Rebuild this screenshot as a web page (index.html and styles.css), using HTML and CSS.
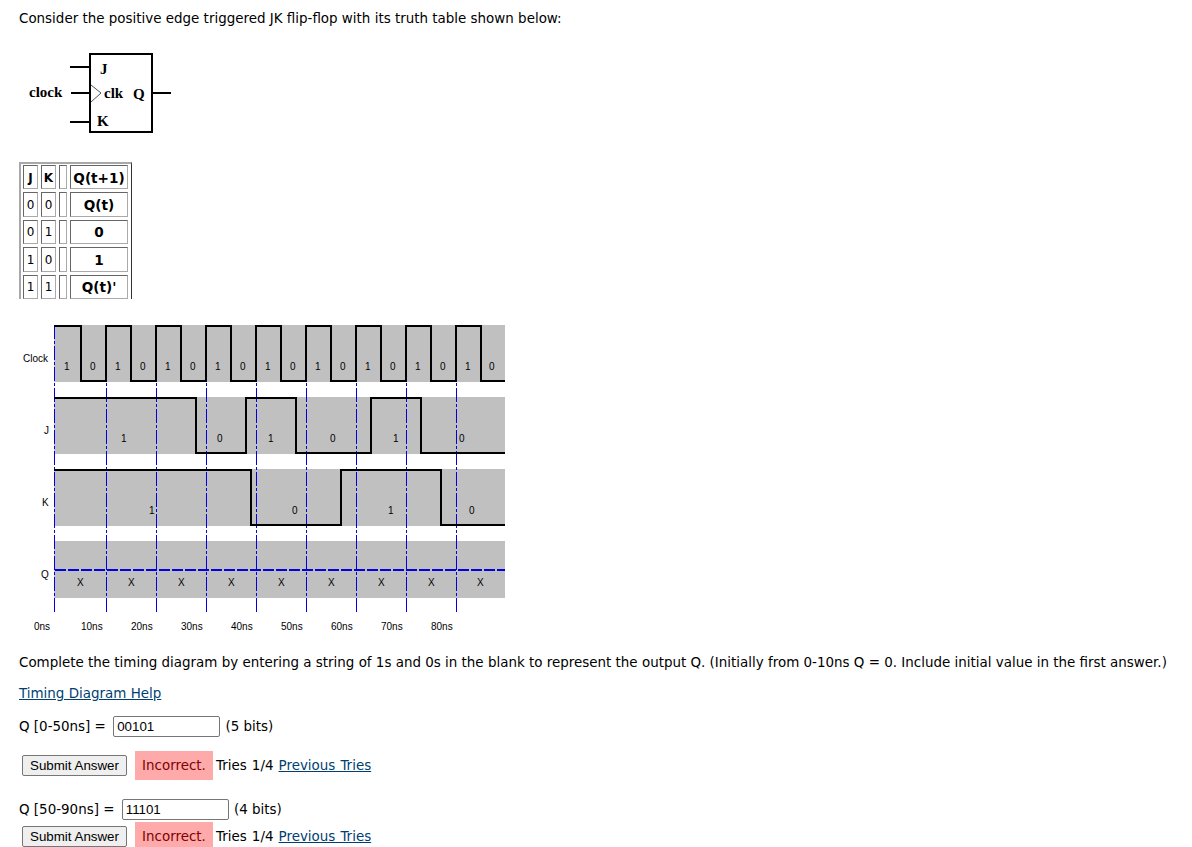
FILE: index.html
```html
<!DOCTYPE html>
<html lang="en">
<head>
    <meta charset="UTF-8">
    <title>JK flip-flop timing diagram</title>
    <link rel="stylesheet" href="styles.css">
</head>
<body>
    <p class="intro">Consider the positive edge triggered JK flip-flop with its truth table shown below:</p>

    <svg class="flipflop" width="160" height="90" viewBox="20 50 160 90">
        <rect x="90" y="54" width="62" height="78" fill="#fff" stroke="#000" stroke-width="2"/>
        <path d="M70 67h20M71 93h19M70 122h20M153 93h18" stroke="#000" stroke-width="2" fill="none"/>
        <path d="M91 85l10 8-10 9" stroke="#555" stroke-width="1" fill="#fff"/>
        <text class="ff-label" x="100" y="74">J</text>
        <text class="ff-label" x="29" y="97">clock</text>
        <text class="ff-label" x="104" y="98">clk</text>
        <text class="ff-label" x="133" y="99">Q</text>
        <text class="ff-label" x="97" y="126">K</text>
    </svg>

    <div class="truth-wrap">
        <table class="truth">
            <tr><th class="bit">J</th><th class="bit">K</th><td class="gap"></td><th>Q(t+1)</th></tr>
            <tr><td class="bit">0</td><td class="bit">0</td><td class="gap"></td><th>Q(t)</th></tr>
            <tr><td class="bit">0</td><td class="bit">1</td><td class="gap"></td><th>0</th></tr>
            <tr><td class="bit">1</td><td class="bit">0</td><td class="gap"></td><th>1</th></tr>
            <tr><td class="bit">1</td><td class="bit">1</td><td class="gap"></td><th>Q(t)'</th></tr>
        </table>
    </div>

    <svg class="timing" width="500" height="320" viewBox="19 315 500 320">
        <!-- bands -->
        <rect class="band" x="54" y="325" width="451" height="57"/>
        <rect class="band" x="54" y="397" width="451" height="57"/>
        <rect class="band" x="54" y="469" width="451" height="57"/>
        <rect class="band" x="54" y="541" width="451" height="57"/>

        <!-- clock period markers -->
        <path class="marker" d="M54.5 325V613M106.5 325V613M156.5 325V613M206.5 325V613M256.5 325V613M306.5 325V613M356.5 325V613M406.5 325V613M456.5 325V613"/>
        <path class="q-line" d="M55 570H505"/>

        <!-- waves -->
        <path class="wave" d="M54 326H81V381H106V326H131V381H156V326H181V381H206V326H231V381H256V326H281V381H306V326H331V381H356V326H381V381H406V326H431V381H456V326H481V381H505"/>
        <path class="wave" d="M54 398H196V453H246V398H296V453H371V398H421V453H505"/>
        <path class="wave" d="M54 470H251V525H341V470H441V525H505"/>

        <text class="t" x="23" y="362">Clock</text>
        <text class="t" x="44" y="434">J</text>
        <text class="t" x="42" y="506">K</text>
        <text class="t" x="41" y="578">Q</text>

        <text class="t" x="64" y="370">1</text><text class="t" x="90" y="370">0</text>
        <text class="t" x="115" y="370">1</text><text class="t" x="140" y="370">0</text>
        <text class="t" x="165" y="370">1</text><text class="t" x="190" y="370">0</text>
        <text class="t" x="215" y="370">1</text><text class="t" x="240" y="370">0</text>
        <text class="t" x="265" y="370">1</text><text class="t" x="290" y="370">0</text>
        <text class="t" x="315" y="370">1</text><text class="t" x="340" y="370">0</text>
        <text class="t" x="365" y="370">1</text><text class="t" x="390" y="370">0</text>
        <text class="t" x="415" y="370">1</text><text class="t" x="440" y="370">0</text>
        <text class="t" x="465" y="370">1</text><text class="t" x="489" y="370">0</text>

        <text class="t" x="121" y="442">1</text><text class="t" x="217" y="442">0</text>
        <text class="t" x="268" y="442">1</text><text class="t" x="330" y="442">0</text>
        <text class="t" x="393" y="442">1</text><text class="t" x="459" y="442">0</text>

        <text class="t" x="149" y="514">1</text><text class="t" x="292" y="514">0</text>
        <text class="t" x="388" y="514">1</text><text class="t" x="469" y="514">0</text>

        <text class="t" x="77" y="586">X</text><text class="t" x="128" y="586">X</text>
        <text class="t" x="178" y="586">X</text><text class="t" x="228" y="586">X</text>
        <text class="t" x="278" y="586">X</text><text class="t" x="328" y="586">X</text>
        <text class="t" x="378" y="586">X</text><text class="t" x="428" y="586">X</text>
        <text class="t" x="477" y="586">X</text>

        <text class="t" x="34" y="630">0ns</text><text class="t" x="81" y="630">10ns</text>
        <text class="t" x="131" y="630">20ns</text><text class="t" x="181" y="630">30ns</text>
        <text class="t" x="231" y="630">40ns</text><text class="t" x="281" y="630">50ns</text>
        <text class="t" x="331" y="630">60ns</text><text class="t" x="381" y="630">70ns</text>
        <text class="t" x="431" y="630">80ns</text>
    </svg>

    <p class="prompt">Complete the timing diagram by entering a string of 1s and 0s in the blank to represent the output Q. (Initially from 0-10ns Q = 0. Include initial value in the first answer.)</p>
    <p class="help"><a href="#">Timing Diagram Help</a></p>

    <p class="answer first">Q [0-50ns] = <input type="text" value="00101"> (5 bits)</p>
    <div class="submit-row">
        <button>Submit Answer</button>
        <span class="incorrect">Incorrect.</span>
        <span class="tries">Tries 1/4 <a href="#">Previous Tries</a></span>
    </div>

    <p class="answer second">Q [50-90ns] = <input type="text" value="11101"> (4 bits)</p>
    <div class="submit-row">
        <button>Submit Answer</button>
        <span class="incorrect">Incorrect.</span>
        <span class="tries">Tries 1/4 <a href="#">Previous Tries</a></span>
    </div>
</body>
</html>
```

FILE: styles.css
```css
html, body {
    height: 847px;
    overflow: hidden;
}
body {
    font-family: "DejaVu Sans", Verdana, sans-serif;
    font-size: 13.45px;
    line-height: 18px;
    color: #000;
    background: #fff;
    margin: 0;
    padding: 10px 0 0 19px;
}
p {
    margin: 0;
}
a {
    color: #003f72;
}
svg {
    display: block;
}
.flipflop {
    margin: 22px 0 0 1px;
}
.ff-label {
    font-family: "Liberation Serif", serif;
    font-weight: bold;
    font-size: 15px;
}
.truth-wrap {
    box-sizing: border-box;
    width: 113px;
    height: 137px;
    margin-top: 22px;
    overflow: hidden;
    border-top: 2px solid #a8a8a8;
    border-left: 2px solid #a8a8a8;
    border-right: 1px solid #333;
}
.truth {
    margin: -2px 0 0 -1px;
    border-spacing: 3px;
    font-size: 12px;
}
.truth td, .truth th {
    box-sizing: border-box;
    border: 1px solid;
    border-color: #666 #aaa #aaa #666;
    padding: 1px 0 0;
    height: 24.4px;
    text-align: center;
}
.truth th {
    width: 58px;
    font-size: 13.6px;
}
.truth .bit {
    width: 15px;
    font-size: 12px;
}
.truth .gap {
    width: 8px;
}
.timing {
    margin-top: 16px;
}
.band {
    fill: #c0c0c0;
}
.wave {
    fill: none;
    stroke: #000;
    stroke-width: 2;
}
.marker {
    fill: none;
    stroke: #0000e0;
    stroke-width: 1;
    stroke-dasharray: 14 2 3 2;
}
.q-line {
    stroke: #0000e0;
    stroke-width: 2;
    stroke-dasharray: 11 2;
}
.t {
    font-family: "Liberation Sans", Arial, sans-serif;
    font-size: 11.5px;
    fill: #000;
    transform-box: fill-box;
    transform-origin: 0 0;
    transform: scaleX(0.87);
}
.prompt {
    margin-top: 19px;
    white-space: nowrap;
}
.help {
    margin-top: 13px;
}
.answer input {
    font-family: "Liberation Sans", Arial, sans-serif;
    font-size: 13.33px;
    width: 107px;
    height: 21px;
    box-sizing: border-box;
    padding: 0 3px 1px;
    margin: 0 1px 0 3px;
    border: 1px solid #767676;
    border-radius: 2px;
    vertical-align: middle;
}
.answer.first {
    margin-top: 13px;
}
.answer.second {
    margin-top: 19px;
}
.submit-row {
    display: flex;
    align-items: center;
    height: 29px;
    margin-left: 3px;
}
.answer.first + .submit-row {
    margin-top: 14px;
}
.answer.second + .submit-row {
    margin-top: 2px;
}
.submit-row button {
    font-family: "Liberation Sans", Arial, sans-serif;
    font-size: 13.33px;
    width: 105px;
    height: 21px;
    padding: 0;
    background: #efefef;
    border: 1px solid #767676;
    border-radius: 2px;
    margin-right: 8px;
}
.incorrect {
    background: #ffaaaa;
    color: #800000;
    height: 29px;
    line-height: 29px;
    width: 78px;
    text-align: center;
    margin-right: 3px;
}
.tries {
    word-spacing: 0.8px;
}
```
